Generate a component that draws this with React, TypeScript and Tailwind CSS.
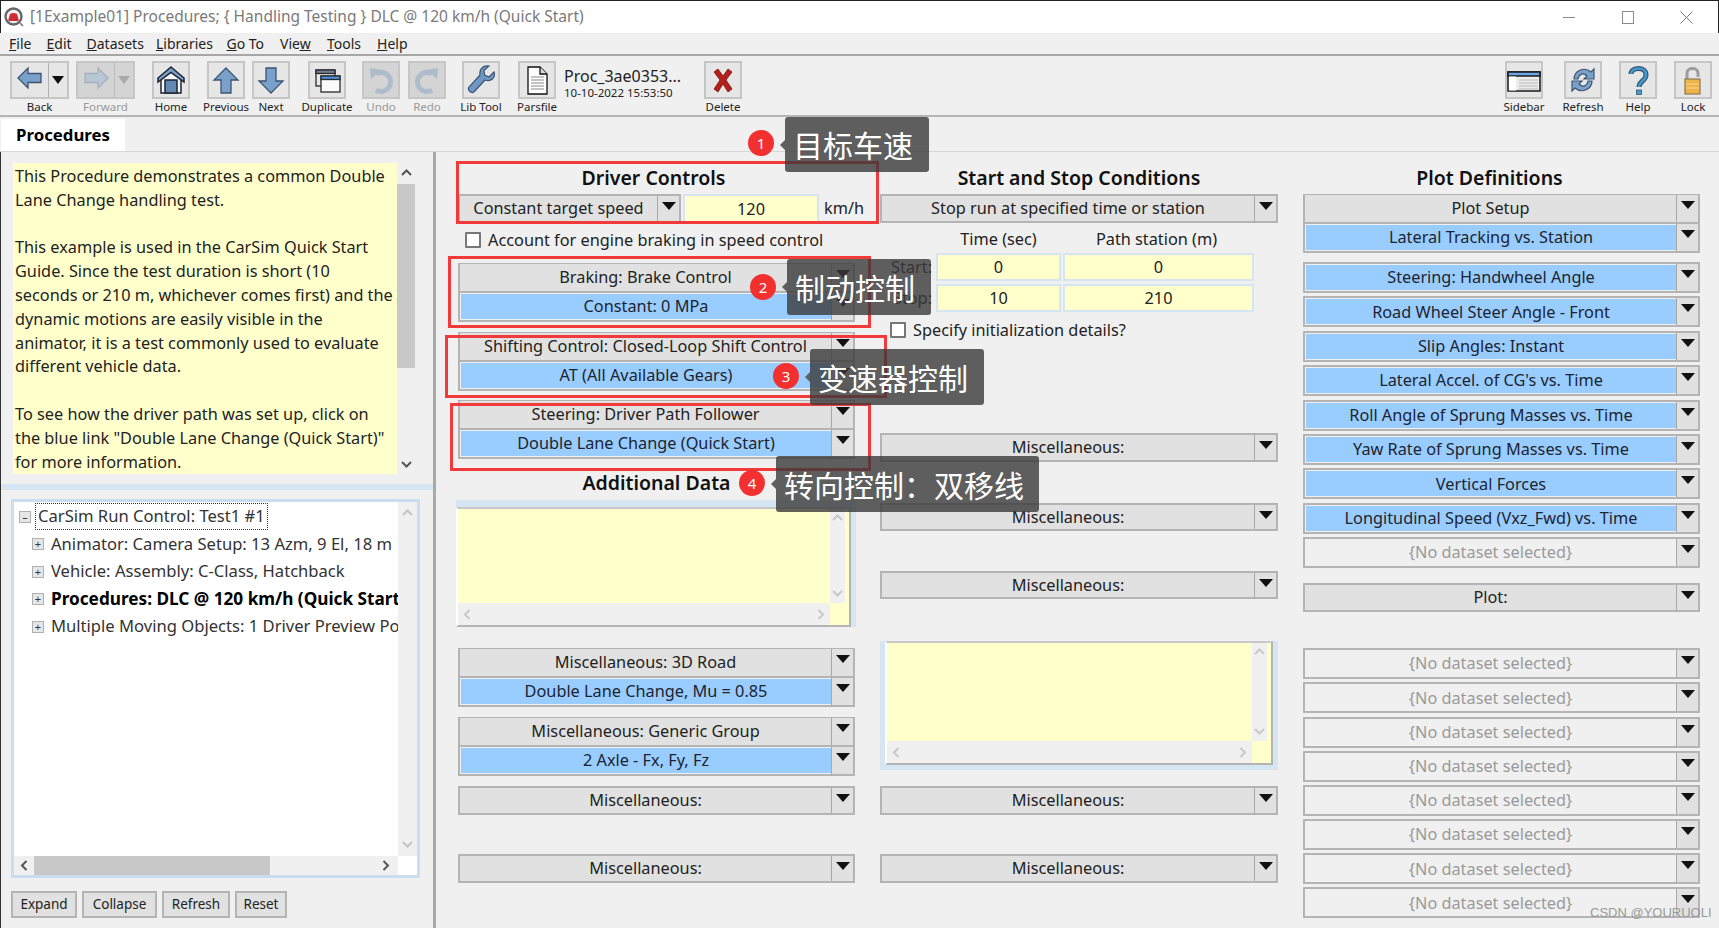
import React from "react";

const Arrow = () => (
  <svg width="14" height="8" viewBox="0 0 14 8" className="block"><path d="M0 0 H14 L7 8 Z" fill="#111" /></svg>
);

type Kind = "gray" | "blue" | "none";
const bgOf = (k: Kind) => (k === "gray" ? "bg-[#e1e1e1] text-[#222]" : k === "blue" ? "bg-[#99ccff] text-[#1c2430]" : "bg-[#f0f0f0] text-[#9a9a9a]");

function Seg({ label, kind, h }: { label: string; kind: Kind; h: string }) {
  return (
    <div className={`flex ${h}`}>
      <div className={`flex-1 min-w-0 flex items-center justify-center ${bgOf(kind)} ${kind === "blue" ? "m-[1px] mr-0" : ""} whitespace-nowrap`}>
        {label}
      </div>
      <div className="w-[22px] shrink-0 bg-[#e1e1e1] border-l border-[#a8a8a8] flex justify-center pt-[6px]"><Arrow /></div>
    </div>
  );
}

function Combo({ label, kind = "gray", h = "h-[29px]", cls = "" }: { label: string; kind?: Kind; h?: string; cls?: string }) {
  return (
    <div className={`border-2 border-[#b4b4b4] box-border ${cls}`}>
      <Seg label={label} kind={kind} h={h} />
    </div>
  );
}

function Combo2({ a, b, cls = "" }: { a: string; b: string; cls?: string }) {
  return (
    <div className={`border-2 border-t border-[#b4b4b4] box-border ${cls}`}>
      <Seg label={a} kind="gray" h="h-[27px]" />
      <div className="h-[2px] bg-[#b4b4b4]" />
      <Seg label={b} kind="blue" h="h-[27px]" />
    </div>
  );
}

function Chev({ d, c = "#555" }: { d: "up" | "down" | "left" | "right"; c?: string }) {
  const p = { up: "M1 7 L5.5 2.5 L10 7", down: "M1 3 L5.5 7.5 L10 3", left: "M7.5 1 L3 5.5 L7.5 10", right: "M3.5 1 L8 5.5 L3.5 10" }[d];
  return <svg width="11" height="11" viewBox="0 0 11 11" className="shrink-0"><path d={p} fill="none" stroke={c} strokeWidth="2" /></svg>;
}

function TextArea({ cls = "" }: { cls?: string }) {
  return (
    <div className={`border-2 border-white border-b-[#b4b4b4] border-r-[#b4b4b4] border-t-[#c8c8c8] bg-[#ffffcc] flex flex-col ${cls}`}>
      <div className="flex flex-1 min-h-0">
        <div className="flex-1" />
        <div className="w-[15px] bg-[#f0f0f0] flex flex-col justify-between items-center py-1">
          <Chev d="up" c="#c8c8c8" /><Chev d="down" c="#c8c8c8" />
        </div>
        <div className="w-[4px]" />
      </div>
      <div className="flex h-[22px]">
        <div className="flex-1 bg-[#f0f0f0] flex justify-between items-center px-1"><Chev d="left" c="#c8c8c8" /><Chev d="right" c="#c8c8c8" /></div>
        <div className="w-[19px]" />
      </div>
    </div>
  );
}

const F = "#7aa0cc";
const S = "#3d5470";
const Icons: Record<string, React.ReactNode> = {
  back: <path d="M3 13 L13 3 V8.5 H26 V17.5 H13 V23 Z" fill={F} stroke={S} strokeWidth="1.3" />,
  fwd: <path d="M27 13 L17 3 V8.5 H4 V17.5 H17 V23 Z" fill="#b9c6d4" stroke="#a4b0bd" strokeWidth="1.3" />,
  home: (
    <g stroke="#1e2530" strokeWidth="1.5">
      <path d="M5 14 L15 6 L25 14 V28 H5 Z" fill="#f6f7f9" />
      <rect x="9" y="15" width="12" height="13" fill="#6489b5" />
      <path d="M15 2 L28 13 V17 L15 7.5 L2 17 V13 Z" fill="#7aa0cc" />
    </g>
  ),
  up: <path d="M15 3 L27 15 H20 V28 H10 V15 H3 Z" fill={F} stroke={S} strokeWidth="1.3" />,
  down: <path d="M15 28 L27 16 H20 V3 H10 V16 H3 Z" fill={F} stroke={S} strokeWidth="1.3" />,
  dup: (
    <g stroke="#2a2a2a" strokeWidth="1.3">
      <rect x="4" y="5" width="19" height="16" fill="#e8e8e8" />
      <rect x="4" y="5" width="19" height="3.5" fill="#6f7f95" />
      <rect x="9" y="11" width="19" height="16" fill="#fafafa" />
      <rect x="9" y="11" width="19" height="3.5" fill="#4a90d9" />
    </g>
  ),
  undo: (
    <g>
      <path d="M10 9 A9.5 9.5 0 1 1 10 25" fill="none" stroke="#adbccb" strokeWidth="5" />
      <path d="M4 3 L15 5 L5 14 Z" fill="#adbccb" />
    </g>
  ),
  redo: (
    <g>
      <path d="M20 9 A9.5 9.5 0 1 0 20 25" fill="none" stroke="#adbccb" strokeWidth="5" />
      <path d="M26 3 L15 5 L25 14 Z" fill="#adbccb" />
    </g>
  ),
  wrench: <path d="M28 7 L23 12 L18.5 10 L18 5.5 L23 1 C17 0 13 4 14 10 L3 22 C1 25 5 29 8 27 L19 15 C25 17 30 13 28 7 Z" fill="#6f96c4" stroke={S} strokeWidth="1.2" />,
  doc: (
    <g stroke="#111" strokeWidth="1.3">
      <path d="M6 2 H18 L25 9 V29 H6 Z" fill="#fff" />
      <path d="M18 2 V9 H25" fill="#ddd" />
      <path d="M9 12 H22 M9 15 H22 M9 18 H22 M9 21 H22 M9 24 H22" stroke="#888" strokeWidth="1" />
    </g>
  ),
  del: <path d="M6 7 L10 4 L15 11 L20 4 L24 7 L18 15 L24 24 L20 27 L15 19 L10 27 L6 24 L12 15 Z" fill="#b3201c" stroke="#7d1512" strokeWidth="0.8" />,
  side: (
    <g stroke="#1a1a1a" strokeWidth="1.5">
      <rect x="1" y="7" width="32" height="19" fill="#ececec" />
      <rect x="1" y="7" width="32" height="4" fill="#6aa6e6" />
      <rect x="2" y="11.5" width="7" height="14" fill="#fff" stroke="none" />
      <path d="M12 15 H31 M12 18 H31 M12 21 H31 M12 24 H31" stroke="#bbb" strokeWidth="1" />
    </g>
  ),
  refresh: (
    <g fill={F} stroke={S} strokeWidth="1.2">
      <path d="M6 14 C6 6 16 1 23 7 L26 4 V14 H16 L19 11 C15 7 11 9 10 14 Z" />
      <path d="M24 16 C24 24 14 29 7 23 L4 26 V16 H14 L11 19 C15 23 19 21 20 16 Z" />
    </g>
  ),
  help: <g><path d="M8 9 C8 2 23 1 23 10 C23 16 16 16 16 22" fill="none" stroke={S} strokeWidth="5" /><path d="M8 9 C8 2 23 1 23 10 C23 16 16 16 16 22" fill="none" stroke="#3f9bd0" strokeWidth="2.6" /><rect x="13.5" y="25" width="5" height="4.5" fill="#3f9bd0" stroke={S} strokeWidth="0.8" /></g>,
  lock: (
    <g>
      <path d="M9 16 V8 C9 2 20 2 20 8 V12" fill="none" stroke="#9c9c9c" strokeWidth="3" />
      <rect x="7" y="14" width="15" height="15" fill="#eeb44a" stroke="#8a7a55" strokeWidth="1.2" />
      <path d="M8 19 H21 M8 23 H21" stroke="#f7d88f" strokeWidth="1" />
    </g>
  ),
};

function Tool({ icon, label, dim = false, vw = 30 }: { icon: string; label: string; dim?: boolean; vw?: number }) {
  return (
    <div className="flex flex-col items-center w-[38px] shrink-0">
      <div className={`w-[38px] h-[38px] border-2 border-[#c6c6c6] ${dim ? "bg-[#d4d4d4]" : "bg-[#e6e6e6]"} flex items-center justify-center`}>
        <svg width={vw} height="30" viewBox={`0 0 ${vw} 30`}>{Icons[icon]}</svg>
      </div>
      <div className={`text-[11.5px] leading-[14px] mt-[1px] whitespace-nowrap ${dim ? "text-[#999]" : "text-[#222]"}`}>{label}</div>
    </div>
  );
}

function SplitTool({ icon, label, dim = false }: { icon: string; label: string; dim?: boolean }) {
  return (
    <div className="flex flex-col items-center w-[59px] shrink-0">
      <div className={`w-[59px] h-[38px] border-2 border-[#c6c6c6] ${dim ? "bg-[#d4d4d4]" : "bg-[#e6e6e6]"} flex`}>
        <div className="w-[36px] flex items-center justify-center"><svg width="30" height="30" viewBox="0 0 30 30">{Icons[icon]}</svg></div>
        <div className={`flex-1 border-l ${dim ? "border-[#bcbcbc]" : "border-[#b0b0b0]"} flex items-center justify-center`}>
          <svg width="12" height="8" viewBox="0 0 12 8"><path d="M0 0 H12 L6 8 Z" fill={dim ? "#aaa" : "#111"} /></svg>
        </div>
      </div>
      <div className={`text-[11.5px] leading-[14px] mt-[1px] ${dim ? "text-[#999]" : "text-[#222]"}`}>{label}</div>
    </div>
  );
}

function Menu({ pre, u, post, w }: { pre?: string; u: string; post?: string; w: string }) {
  return <div className={w}>{pre}<span className="underline">{u}</span>{post}</div>;
}

function Check({ label, cls = "" }: { label: string; cls?: string }) {
  return (
    <div className={`flex items-center gap-[7px] ${cls}`}>
      <div className="w-[16px] h-[16px] bg-white border-2 border-[#777] rounded-[1px]" />
      <span className="whitespace-nowrap text-[#222]">{label}</span>
    </div>
  );
}

function TreeRow({ label, bold = false, sign = "+", root = false }: { label: string; bold?: boolean; sign?: string; root?: boolean }) {
  return (
    <div className={`h-[27.5px] flex items-center whitespace-nowrap overflow-hidden text-[16.6px] ${root ? "pl-[5px]" : "pl-[18px]"}`}>
      <div className="w-[12px] h-[12px] border border-[#b0b0b0] bg-[#e6e6e6] text-[11px] leading-[9px] text-center text-[#334] shrink-0">{sign}</div>
      {root ? (
        <span className="ml-[4px] px-[2px] border border-dotted border-[#333] h-[27px] flex items-center text-[#333]">{label}</span>
      ) : (
        <span className={`ml-[2px] pl-[5px] ${bold ? "font-bold text-black text-[17.2px]" : "text-[#333]"}`}>{label}</span>
      )}
    </div>
  );
}

function Btn({ label, w }: { label: string; w: string }) {
  return <div className={`${w} h-[27px] bg-[#e1e1e1] border-2 border-[#b4b4b4] flex items-center justify-center text-[13.5px] text-[#222]`}>{label}</div>;
}

function Callout({ n, text, cx, cy, left, top, w, h }: { n: string; text: string; cx: string; cy: string; left: string; top: string; w: string; h: string }) {
  return (
    <>
      <div className={`absolute ${left} ${top} ${w} ${h} bg-[#3a3a3a]/80 rounded-[3px] flex items-center justify-start pl-[8px] text-white text-[30px] whitespace-nowrap`} style={{ fontFamily: '"Noto Sans CJK SC", sans-serif' }}>
        <div className="absolute -left-[5px] top-1/2 -mt-[5px] w-0 h-0 border-y-[5px] border-y-transparent border-r-[5px] border-r-[#5e5e5e]" />
        {text}
      </div>
      <div className={`absolute ${cx} ${cy} w-[26px] h-[26px] rounded-full bg-[#f23030] text-white text-[15px] flex items-center justify-center`}>{n}</div>
    </>
  );
}

const plots = [
  "Steering: Handwheel Angle",
  "Road Wheel Steer Angle - Front",
  "Slip Angles: Instant",
  "Lateral Accel. of CG's vs. Time",
  "Roll Angle of Sprung Masses vs. Time",
  "Yaw Rate of Sprung Masses vs. Time",
  "Vertical Forces",
  "Longitudinal Speed (Vxz_Fwd) vs. Time",
];

const heading = "h-[42px] pt-[12px] text-center font-semibold text-[19.5px] leading-[28px] text-[#111] whitespace-nowrap";

export default function App() {
  return (
    <div className="relative w-[1719px] h-[928px] overflow-hidden bg-[#f0f0f0] text-[16.3px]" style={{ fontFamily: '"Noto Sans", "Open Sans", sans-serif' }}>
      {/* Title bar */}
      <div className="h-[33px] bg-white border-t border-x border-[#222] flex items-center">
        <svg width="20" height="20" viewBox="0 0 20 20" className="ml-[3px] shrink-0">
          <circle cx="9.5" cy="9.5" r="8" fill="#f2f2f2" stroke="#666" strokeWidth="2.4" />
          <path d="M4.5 12 L6 7 Q9.5 5 13 7 L14.5 12 V14 H4.5 Z" fill="#d02a32" />
          <path d="M16 16 L19 19" stroke="#777" strokeWidth="1.6" />
        </svg>
        <div className="ml-[6px] text-[#7a7a7a] text-[15.5px] whitespace-nowrap">[1Example01] Procedures; {"{ Handling Testing }"} DLC @ 120 km/h (Quick Start)</div>
        <div className="ml-auto flex items-center">
          <div className="w-[12px] h-[1px] bg-[#8a8a8a] mr-[47px]" />
          <div className="w-[12px] h-[13px] border border-[#8a8a8a] mr-[46px]" />
          <svg width="13" height="13" viewBox="0 0 13 13" className="mr-[25px]"><path d="M0.5 0.5 L12.5 12.5 M12.5 0.5 L0.5 12.5" stroke="#777" fill="none" /></svg>
        </div>
      </div>
      {/* Menu */}
      <div className="h-[23px] flex items-center pl-[9px] text-[14px] text-[#222] border-b-2 border-[#a6a6a6]">
        <Menu u="F" post="ile" w="w-[37.5px]" />
        <Menu u="E" post="dit" w="w-[40px]" />
        <Menu u="D" post="atasets" w="w-[69.5px]" />
        <Menu u="L" post="ibraries" w="w-[70.5px]" />
        <Menu u="G" post="o To" w="w-[53.5px]" />
        <Menu pre="Vie" u="w" w="w-[47px]" />
        <Menu u="T" post="ools" w="w-[50px]" />
        <Menu u="H" post="elp" w="w-[40px]" />
      </div>
      {/* Toolbar */}
      <div className="h-[61px] flex items-start pt-[5px] pl-[10px] border-b-2 border-[#b4b4b4]">
        <SplitTool icon="back" label="Back" />
        <div className="w-[7px]" />
        <SplitTool icon="fwd" label="Forward" dim />
        <div className="w-[17px]" />
        <Tool icon="home" label="Home" />
        <div className="w-[17px]" />
        <Tool icon="up" label="Previous" />
        <div className="w-[7px]" />
        <Tool icon="down" label="Next" />
        <div className="w-[18px]" />
        <Tool icon="dup" label="Duplicate" />
        <div className="w-[16px]" />
        <Tool icon="undo" label="Undo" dim />
        <div className="w-[8px]" />
        <Tool icon="redo" label="Redo" dim />
        <div className="w-[16px]" />
        <Tool icon="wrench" label="Lib Tool" />
        <div className="w-[18px]" />
        <Tool icon="doc" label="Parsfile" />
        <div className="ml-[8px] w-[140px] shrink-0 mt-[5px] flex flex-col text-[#222]">
          <div className="text-[16px] leading-[20px] whitespace-nowrap">Proc_3ae0353...</div>
          <div className="text-[11.5px] leading-[14px] whitespace-nowrap">10-10-2022 15:53:50</div>
        </div>
        <Tool icon="del" label="Delete" />
        <div className="flex-1" />
        <Tool icon="side" label="Sidebar" vw={34} />
        <div className="w-[21px]" />
        <Tool icon="refresh" label="Refresh" />
        <div className="w-[17px]" />
        <Tool icon="help" label="Help" />
        <div className="w-[17px]" />
        <Tool icon="lock" label="Lock" />
        <div className="w-[7px]" />
      </div>
      {/* Tabs */}
      <div className="h-[35px] flex items-end border-b border-[#d6d6d6]">
        <div className="ml-[1px] w-[124px] h-[32px] bg-white font-bold text-black text-[16.8px] flex items-center justify-center">Procedures</div>
      </div>
      {/* Body */}
      <div className="flex h-[776px]">
        <div className="w-[433px] shrink-0 flex flex-col border-l border-[#333]">
          <div className="pl-[12px] pr-[16px] pt-[11px]">
            <div className="h-[311px] bg-[#ffffcc] flex">
              <div className="flex-1 min-w-0 pl-[2px] pt-[2px] leading-[23.8px] text-[#222] whitespace-pre overflow-hidden">
                {`This Procedure demonstrates a common Double
Lane Change handling test.

This example is used in the CarSim Quick Start
Guide. Since the test duration is short (10
seconds or 210 m, whichever comes first) and the
dynamic motions are easily visible in the
animator, it is a test commonly used to evaluate
different vehicle data.

To see how the driver path was set up, click on
the blue link "Double Lane Change (Quick Start)"
for more information.`}
              </div>
              <div className="w-[20px] shrink-0 bg-[#f0f0f0] flex flex-col items-center pr-[2px]">
                <div className="h-[21px] flex items-center"><Chev d="up" /></div>
                <div className="h-[184px] w-full bg-[#c8c8c8]" />
                <div className="flex-1 flex items-end pb-[4px]"><Chev d="down" /></div>
              </div>
            </div>
          </div>
          <div className="h-[6px] mt-[10px] bg-[#d5e5f2]" />
          <div className="mt-[9px] ml-[10px] mr-[13px] h-[379px] border-[3px] border-[#c9def1] bg-white flex flex-col">
            <div className="flex flex-1 min-h-0">
              <div className="flex-1 min-w-0 pt-[1px] overflow-hidden">
                <TreeRow label="CarSim Run Control: Test1 #1" sign="–" root />
                <TreeRow label="Animator: Camera Setup: 13 Azm, 9 El, 18 m" />
                <TreeRow label="Vehicle: Assembly: C-Class, Hatchback" />
                <TreeRow label="Procedures: DLC @ 120 km/h (Quick Start)" bold />
                <TreeRow label="Multiple Moving Objects: 1 Driver Preview Point" />
              </div>
              <div className="w-[19px] bg-[#f0f0f0] flex flex-col justify-between items-center py-[6px]">
                <Chev d="up" c="#c4c4c4" /><Chev d="down" c="#c4c4c4" />
              </div>
            </div>
            <div className="h-[19px] flex">
              <div className="flex-1 bg-[#f0f0f0] flex items-center">
                <div className="w-[20px] flex justify-center"><Chev d="left" /></div>
                <div className="w-[236px] h-full bg-[#c8c8c8]" />
                <div className="flex-1 flex justify-end pr-[7px]"><Chev d="right" /></div>
              </div>
              <div className="w-[19px] bg-white" />
            </div>
          </div>
          <div className="ml-[10px] mt-[13px] flex gap-[5px]">
            <Btn label="Expand" w="w-[66px]" />
            <Btn label="Collapse" w="w-[75px]" />
            <Btn label="Refresh" w="w-[68px]" />
            <Btn label="Reset" w="w-[52px]" />
          </div>
        </div>
        <div className="w-[3px] bg-[#a9a9a9] shrink-0" />
        {/* Column 1 */}
        <div className="w-[397px] ml-[22px] shrink-0 flex flex-col">
          <div className={`${heading} pr-[6px]`}>Driver Controls</div>
          <div className="flex h-[29px] items-stretch">
            <div className="w-[223px] shrink-0 border-2 border-[#b4b4b4]"><Seg label="Constant target speed" kind="gray" h="h-full" /></div>
            <div className="w-[136px] shrink-0 ml-[2px] bg-[#ffffcc] border-t-2 border-x-2 border-[#d5e5f2] flex items-center justify-center text-[#222]">120</div>
            <div className="ml-[5px] shrink-0 flex items-center text-[#222]">km/h</div>
          </div>
          <Check label="Account for engine braking in speed control" cls="h-[40px] ml-[7px] pb-[6px]" />
          <Combo2 a="Braking: Brake Control" b="Constant: 0 MPa" />
          <Combo2 cls="mt-[10px]" a="Shifting Control: Closed-Loop Shift Control" b="AT (All Available Gears)" />
          <Combo2 cls="mt-[9px]" a="Steering: Driver Path Follower" b="Double Lane Change (Quick Start)" />
          <div className="h-[41px] pt-[8px] text-center font-semibold text-[19.5px] leading-[32px] text-[#111]">Additional Data</div>
          <div className="border-t-[7px] border-r-[5px] border-[#d5e5f2] -ml-[2px] -mr-[1px]"><TextArea cls="h-[120px]" /></div>
          <Combo2 cls="mt-[21px]" a="Miscellaneous: 3D Road" b="Double Lane Change, Mu = 0.85" />
          <Combo2 cls="mt-[10px]" a="Miscellaneous: Generic Group" b="2 Axle - Fx, Fy, Fz" />
          <Combo cls="mt-[10px]" label="Miscellaneous:" h="h-[25px]" />
          <Combo cls="mt-[39px]" label="Miscellaneous:" h="h-[25px]" />
        </div>
        {/* Column 2 */}
        <div className="w-[398px] ml-[25px] shrink-0 flex flex-col">
          <div className={heading}>Start and Stop Conditions</div>
          <Combo label="Stop run at specified time or station" h="h-[25px]" />
          <div className="h-[30px] pt-[2px] flex items-center text-[#222]">
            <div className="w-[56px]" />
            <div className="w-[125px] text-center">Time (sec)</div>
            <div className="w-[191px] text-center">Path station (m)</div>
          </div>
          <div className="flex h-[28px] items-stretch">
            <div className="w-[53px] flex items-center justify-end pr-[1px] text-[#222]">Start:</div>
            <div className="w-[125px] ml-[3px] bg-[#ffffcc] border-2 border-[#d5e5f2] flex items-center justify-center text-[#222]">0</div>
            <div className="w-[191px] ml-[2px] bg-[#ffffcc] border-2 border-[#d5e5f2] flex items-center justify-center text-[#222]">0</div>
          </div>
          <div className="flex h-[28px] items-stretch mt-[3px]">
            <div className="w-[53px] flex items-center justify-end pr-[1px] text-[#222]">Stop:</div>
            <div className="w-[125px] ml-[3px] bg-[#ffffcc] border-2 border-[#d5e5f2] flex items-center justify-center text-[#222]">10</div>
            <div className="w-[191px] ml-[2px] bg-[#ffffcc] border-2 border-[#d5e5f2] flex items-center justify-center text-[#222]">210</div>
          </div>
          <Check label="Specify initialization details?" cls="h-[34px] ml-[10px] pt-[2px]" />
          <Combo cls="mt-[87px]" label="Miscellaneous:" h="h-[25px]" />
          <Combo cls="mt-[41px]" label="Miscellaneous:" h="h-[24px]" />
          <Combo cls="mt-[40px]" label="Miscellaneous:" h="h-[24px]" />
          <div className="mt-[42px] h-[129px] px-[5px] pb-[5px] bg-[#d5e5f2]"><TextArea cls="h-[124px]" /></div>
          <Combo cls="mt-[16px]" label="Miscellaneous:" h="h-[25px]" />
          <Combo cls="mt-[39px]" label="Miscellaneous:" h="h-[25px]" />
        </div>
        {/* Column 3 */}
        <div className="w-[397px] ml-[25px] shrink-0 flex flex-col">
          <div className={`${heading} pr-[24px]`}>Plot Definitions</div>
          <div className="border-2 border-t border-[#b4b4b4]">
            <Seg label="Plot Setup" kind="gray" h="h-[27px]" />
            <div className="h-[2px] bg-[#b4b4b4]" />
            <Seg label="Lateral Tracking vs. Station" kind="blue" h="h-[27px]" />
          </div>
          <div className="mt-[9px] flex flex-col gap-[3.4px]">
            {plots.map((p) => <Combo key={p} label={p} kind="blue" h="h-[27px]" />)}
            <Combo label="{No dataset selected}" kind="none" h="h-[27px]" />
          </div>
          <Combo cls="mt-[15px]" label="Plot:" h="h-[25px]" />
          <div className="mt-[36px] flex flex-col gap-[3.2px]">
            {[0, 1, 2, 3, 4, 5, 6, 7].map((i) => <Combo key={i} label="{No dataset selected}" kind="none" h="h-[27px]" />)}
          </div>
        </div>
      </div>
      {/* Annotations overlaying the page */}
      <div className="absolute left-[456px] top-[161px] w-[423px] h-[63px] border-[3px] border-[#f23a3a]" />
      <div className="absolute left-[448px] top-[256px] w-[423px] h-[72px] border-[3px] border-[#f23a3a]" />
      <div className="absolute left-[445px] top-[335px] w-[442px] h-[63px] border-[3px] border-[#f23a3a]" />
      <div className="absolute left-[450px] top-[403px] w-[421px] h-[68px] border-[3px] border-[#f23a3a]" />
      <Callout n="1" text="目标车速" cx="left-[748px]" cy="top-[130px]" left="left-[785px]" top="top-[117px]" w="w-[144px]" h="h-[55px]" />
      <Callout n="2" text="制动控制" cx="left-[750px]" cy="top-[274px]" left="left-[787px]" top="top-[259px]" w="w-[144px]" h="h-[56px]" />
      <Callout n="3" text="变速器控制" cx="left-[773px]" cy="top-[363px]" left="left-[810px]" top="top-[349px]" w="w-[174px]" h="h-[56px]" />
      <Callout n="4" text="转向控制：双移线" cx="left-[739px]" cy="top-[470px]" left="left-[776px]" top="top-[456px]" w="w-[263px]" h="h-[56px]" />
      <div className="absolute left-[1590px] top-[905px] text-[13px] leading-[16px] text-[#9a9a9a] whitespace-nowrap" style={{ fontFamily: '"Liberation Sans", sans-serif' }}>CSDN @YOURUOLI</div>
    </div>
  );
}
